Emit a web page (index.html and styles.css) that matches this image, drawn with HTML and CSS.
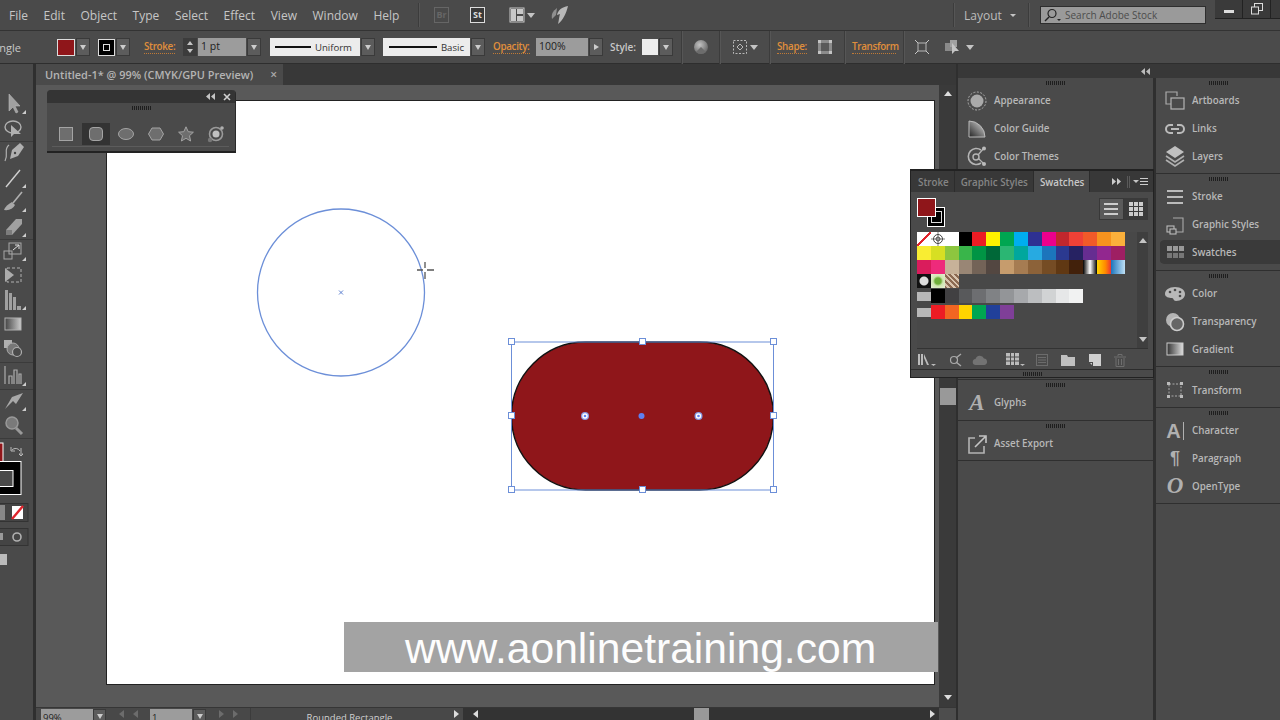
FILE: index.html
```html
<!DOCTYPE html>
<html lang="en">
<head>
    <meta charset="UTF-8">
    <title>Adobe Illustrator</title>
    <link rel="stylesheet" href="styles.css">
</head>
<body>
<div class="app">

    <!-- menu bar -->
    <header class="menubar">
        <nav class="menus">
            <span>File</span><span>Edit</span><span>Object</span><span>Type</span><span>Select</span><span>Effect</span><span>View</span><span>Window</span><span>Help</span>
        </nav>
        <i class="vsep m14"></i>
        <span class="app-btn dim m15">Br</span>
        <span class="app-btn m21">St</span>
        <svg class="m24" width="16" height="16" viewBox="0 0 16 16"><rect x="1" y="1" width="14" height="14" fill="#4a4a4a" stroke="#c8c8c8"/><rect x="2" y="2" width="5" height="12" fill="#c8c8c8"/><rect x="8" y="2" width="6" height="5" fill="#c8c8c8"/><rect x="8" y="9" width="6" height="5" fill="#c8c8c8"/></svg>
        <i class="tri m2"></i>
        <svg class="m15" width="20" height="20" viewBox="0 0 20 20"><path d="M18 1 C12 2 8 5 7 10 L10 9 C9 12 9 15 8 19 C13 15 16 9 18 1Z" fill="#b8b8b8"/><path d="M7 3 C3 6 1 9 2 14 L6 10Z" fill="#8f8f8f"/></svg>
        <div class="menu-right">
            <i class="vsep"></i>
            <span class="layout-name">Layout</span>
            <i class="tri small m8"></i>
            <i class="vsep m12"></i>
            <div class="stock-search">
                <svg width="20" height="16" viewBox="0 0 20 16"><circle cx="9" cy="6.5" r="4" fill="none" stroke="#222" stroke-width="1.2"/><path d="M6 10 L2 14" stroke="#222" stroke-width="1.4"/><path d="M14 12 h4 l-2 2z" fill="#222"/></svg>
                <span>Search Adobe Stock</span>
            </div>
            <div class="win-btns">
                <span class="win-btn"><i class="win-min"></i></span>
                <span class="win-btn"><svg width="12" height="12" viewBox="0 0 12 12"><rect x="3.5" y="0.5" width="8" height="7" fill="none" stroke="#ddd"/><rect x="0.5" y="4" width="7" height="7" fill="#3a3a3a" stroke="#ddd"/></svg></span>
                <span class="win-btn last"></span>
            </div>
        </div>
    </header>

    <!-- control bar -->
    <section class="controlbar">
        <div class="selection-name"><span>Rectangle</span></div>
        <span class="fill-swatch m36"></span>
        <span class="drop m1"></span>
        <span class="stroke-swatch m8"><i></i></span>
        <span class="drop m1"></span>
        <span class="link-label w31 m14">Stroke:</span>
        <span class="spinner m8"><i class="tri up"></i><i class="tri"></i></span>
        <span class="field w48 m1">1 pt</span>
        <span class="drop m1"></span>
        <span class="stroke-pick uniform w90 m9"><i></i>Uniform</span>
        <span class="drop m1"></span>
        <span class="stroke-pick w87 m8"><i></i>Basic</span>
        <span class="drop m1"></span>
        <span class="link-label w37 m8">Opacity:</span>
        <span class="field w52 m6">100%</span>
        <span class="drop side m1"></span>
        <span class="plain-label w25 m7">Style:</span>
        <span class="style-swatch m7"></span>
        <span class="drop m1"></span>
        <i class="vsep tall m8"></i>
        <svg class="m10" width="18" height="18" viewBox="0 0 18 18"><defs><radialGradient id="globeGrad" cx=".4" cy=".35" r=".75"><stop offset="0" stop-color="#c4c4c4"/><stop offset="1" stop-color="#5c5c5c"/></radialGradient></defs><circle cx="9" cy="9" r="7" fill="url(#globeGrad)"/><path d="M9 9 L4 14 A7 7 0 0 0 14 14Z" fill="#6c6c6c"/></svg>
        <i class="vsep tall m9"></i>
        <svg class="m12" width="16" height="16" viewBox="0 0 16 16"><rect x="1.5" y="1.5" width="13" height="13" fill="none" stroke="#b8b8b8" stroke-dasharray="2 1.5"/><path d="M8 5 L11 8 L8 11 L5 8Z" fill="none" stroke="#b8b8b8"/></svg>
        <i class="tri m2"></i>
        <i class="vsep tall m11"></i>
        <span class="link-label w30 m7">Shape:</span>
        <svg class="m10" width="16" height="16" viewBox="0 0 16 16"><rect x="1" y="1" width="14" height="14" fill="#8c8c8c"/><rect x="4" y="4" width="8" height="8" fill="#5a5a5a"/><path d="M1 1h3v3H1zM12 1h3v3h-3zM1 12h3v3H1zM12 12h3v3h-3z" fill="#c4c4c4"/></svg>
        <i class="vsep tall m11"></i>
        <span class="link-label w44 m7">Transform</span>
        <i class="vsep tall m7"></i>
        <svg class="m10" width="16" height="16" viewBox="0 0 16 16"><rect x="4" y="4" width="8" height="8" fill="none" stroke="#b8b8b8"/><path d="M1 1 L4 4 M15 1 L12 4 M1 15 L4 12 M15 15 L12 12" stroke="#c8c8c8"/></svg>
        <svg class="m14" width="18" height="16" viewBox="0 0 18 16"><rect x="1" y="4" width="8" height="8" fill="#8a8a8a"/><rect x="6" y="1" width="7" height="7" fill="#a0a0a0"/><path d="M8 4 L8 15 L11 12 L15 12Z" fill="#c4c4c4"/></svg>
        <i class="tri m4"></i>
    </section>

    <div class="workspace">

        <!-- tools -->
        <aside class="toolbar">
            <div class="tool"><svg width="30" height="24" viewBox="0 0 30 24"><path d="M9 2 V19 L13 15 L16 21 L18 20 L15 14 L20 14Z" fill="#a0a0a0" stroke="#b8b8b8" stroke-width=".6"/><path d="M26 18v4h-4z" fill="#ccc"/></svg></div>
            <div class="tool end"><svg width="30" height="24" viewBox="0 0 30 24"><ellipse cx="13" cy="10" rx="8" ry="6" fill="none" stroke="#b0b0b0" stroke-width="1.4"/><path d="M11 8 V20 L14 17 L21 17Z" fill="#b0b0b0"/></svg></div>
            <div class="tool"><svg width="30" height="24" viewBox="0 0 30 24"><path d="M12 9 L20 2 L24 6 L18 15 L10 18Z" fill="#b0b0b0"/><circle cx="15" cy="12" r="1.2" fill="#444"/><path d="M9 4 C3 9 9 12 5 20" fill="none" stroke="#b0b0b0" stroke-width="1.2"/></svg></div>
            <div class="tool"><svg width="30" height="24" viewBox="0 0 30 24"><path d="M6 21 L20 4" stroke="#d0d0d0" stroke-width="1.4"/><path d="M26 18v4h-4z" fill="#ccc"/></svg></div>
            <div class="tool"><svg width="30" height="24" viewBox="0 0 30 24"><path d="M22 2 L13 13" stroke="#b0b0b0" stroke-width="1.6"/><path d="M12 12 Q6 15 4 20 Q12 21 15 15Z" fill="#a8a8a8"/><path d="M26 18v4h-4z" fill="#ccc"/></svg></div>
            <div class="tool end"><svg width="30" height="24" viewBox="0 0 30 24"><path d="M6 15 L16 4 H22 L22 9 L12 20 H6Z" fill="#a0a0a0"/><path d="M6 15 H12 V20 H6Z" fill="#7c7c7c"/><path d="M26 18v4h-4z" fill="#ccc"/></svg></div>
            <div class="tool"><svg width="30" height="24" viewBox="0 0 30 24"><rect x="4" y="12" width="8" height="8" fill="none" stroke="#a8a8a8"/><rect x="9" y="4" width="12" height="11" fill="none" stroke="#a8a8a8"/><path d="M13 11 L19 6 M15 6 H19 V10" fill="none" stroke="#ddd"/><path d="M26 18v4h-4z" fill="#ccc"/></svg></div>
            <div class="tool"><svg width="30" height="24" viewBox="0 0 30 24"><rect x="7" y="4" width="14" height="14" fill="none" stroke="#b0b0b0" stroke-dasharray="3 2"/><path d="M5 4 L14 11 L5 18Z" fill="#acacac"/></svg></div>
            <div class="tool"><svg width="30" height="24" viewBox="0 0 30 24"><path d="M5 2h3v20H5zM9 5h3v17H9zM13 9h3v13h-3zM17 18h4v4h-4z" fill="#a0a0a0"/><path d="M26 18v4h-4z" fill="#ccc"/></svg></div>
            <div class="tool"><svg width="30" height="24" viewBox="0 0 30 24"><defs><linearGradient id="toolGrad"><stop offset="0" stop-color="#444"/><stop offset="1" stop-color="#ccc"/></linearGradient></defs><rect x="5" y="5" width="16" height="12" fill="url(#toolGrad)" stroke="#b0b0b0"/></svg></div>
            <div class="tool end"><svg width="30" height="24" viewBox="0 0 30 24"><rect x="4" y="3" width="8" height="8" fill="#b0b0b0"/><circle cx="13" cy="12" r="6" fill="#777" stroke="#aaa"/><circle cx="17" cy="15" r="4.5" fill="#4a4a4a" stroke="#b0b0b0" stroke-width="1.2"/></svg></div>
            <div class="tool end chart"><svg width="30" height="24" viewBox="0 0 30 24"><path d="M5 2 V20 M9 20 V12 H12 V20 M14 20 V6 H17 V20 M19 20 V10 H21 V20" fill="none" stroke="#acacac" stroke-width="1.2"/><path d="M26 18v4h-4z" fill="#ccc"/></svg></div>
            <div class="tool"><svg width="30" height="24" viewBox="0 0 30 24"><path d="M5 20 L13 12 L16 15 L23 4 L12 8 L5 20Z" fill="#a8a8a8"/><path d="M26 18v4h-4z" fill="#ccc"/></svg></div>
            <div class="tool end"><svg width="30" height="24" viewBox="0 0 30 24"><path d="M16 15 L22 21" stroke="#999" stroke-width="3"/><circle cx="12" cy="10" r="6" fill="#7a7a7a" stroke="#999" stroke-width="1.5"/></svg></div>
            <svg class="color-well" width="33" height="133" viewBox="0 437 33 133">
                <rect x="-3" y="441" width="6" height="34" fill="#8f161a" stroke="#fff"/>
                <path d="M12 448 A5 5 0 0 1 20 449 M11 445 v4 h4 M21 446 v5 M19 452 h4 l-2 2z" fill="none" stroke="#b8b8b8"/>
                <rect x="-4" y="459.5" width="25" height="33" fill="#000" stroke="#fff"/>
                <rect x="-4" y="468.5" width="17" height="16" fill="#4a4a4a" stroke="#fff"/>
                <rect x="-2" y="501.5" width="30" height="18" fill="#444" stroke="#333"/>
                <rect x="-2" y="503" width="7" height="15" fill="#888"/>
                <rect x="12" y="504" width="11" height="13" fill="#fff"/>
                <path d="M12 517 L23 504" stroke="#e0242c" stroke-width="2.4"/>
                <rect x="-2" y="526.5" width="30" height="17" fill="#444" stroke="#333"/>
                <circle cx="17" cy="535" r="4" fill="none" stroke="#b0b0b0" stroke-width="1.6"/>
                <rect x="-3" y="531" width="6" height="7" fill="#999"/>
                <rect x="-3" y="552" width="10" height="11" fill="#bbb"/>
                <rect x="-3" y="563" width="3" height="4" fill="#999"/>
            </svg>
        </aside>

        <!-- document window -->
        <main class="document">
            <div class="doc-tabs">
                <div class="doc-tab">
                    <span>Untitled-1* @ 99% (CMYK/GPU Preview)</span>
                    <span class="tab-close">×</span>
                </div>
            </div>
            <div class="doc-body">
                <div class="canvas">
                    <div class="artboard">
                        <svg class="art" width="827" height="583" viewBox="107 101 827 583">
                            <circle cx="341" cy="292.5" r="83.5" fill="none" stroke="#6c8fd8" stroke-width="1.3"/>
                            <path d="M339 290.5 l4 4 m0 -4 l-4 4" stroke="#5f82d0"/>
                            <path d="M425 262 v6 M425 272 v7 M417 270 h6 M427 270 h7" stroke="#555" stroke-width="1.3"/>

                            <rect x="511.5" y="342" width="262" height="148" rx="74" fill="#8f161a" stroke="#111" stroke-width="1.4"/>
                            <rect x="511.5" y="342" width="262" height="148" fill="none" stroke="#6c8fd8"/>
                            <g fill="#fff" stroke="#6c8fd8">
                                <rect x="508.5" y="338.5" width="6" height="6"/>
                                <rect x="639.5" y="338.5" width="6" height="6"/>
                                <rect x="770.5" y="338.5" width="6" height="6"/>
                                <rect x="508.5" y="412.5" width="6" height="6"/>
                                <rect x="770.5" y="412.5" width="6" height="6"/>
                                <rect x="508.5" y="486.5" width="6" height="6"/>
                                <rect x="639.5" y="486.5" width="6" height="6"/>
                                <rect x="770.5" y="486.5" width="6" height="6"/>
                            </g>
                            <g fill="#8a9de6">
                                <circle cx="585" cy="416" r="4"/>
                                <circle cx="698.5" cy="416" r="4"/>
                            </g>
                            <g fill="#fff">
                                <circle cx="585" cy="416" r="2.7"/>
                                <circle cx="698.5" cy="416" r="2.7"/>
                            </g>
                            <g fill="#5f7ff0">
                                <circle cx="585" cy="416" r="1.3"/>
                                <circle cx="698.5" cy="416" r="1.3"/>
                                <circle cx="641.5" cy="416" r="3"/>
                            </g>
                        </svg>
                    </div>
                    <div class="watermark">www.aonlinetraining.com</div>
                </div>
                <div class="vscroll">
                    <i class="tri up pale"></i>
                    <span class="vthumb"></span>
                    <i class="tri pale down-end"></i>
                </div>
            </div>
            <footer class="statusbar">
                <span class="status-field w52">99%</span>
                <span class="drop flat"></span>
                <span class="status-nav"><i class="arrow-l"></i><i class="arrow-l"></i></span>
                <span class="status-field w42">1</span>
                <span class="drop flat m1"></span>
                <span class="status-nav"><i class="arrow-r"></i><i class="arrow-r"></i></span>
                <span class="status-name">Rounded Rectangle</span>
                <i class="arrow-r bright"></i>
                <div class="hscroll">
                    <i class="arrow-l bright"></i>
                    <span class="hthumb"></span>
                    <i class="arrow-r bright"></i>
                </div>
                <span class="scroll-corner"></span>
            </footer>
        </main>

        <!-- collapsed panel docks -->
        <aside class="dock">
            <div class="dock-head">
                <svg width="9" height="7" viewBox="0 0 9 7"><path d="M4 0 V7 L0 3.5Z M9 0 V7 L5 3.5Z" fill="#bbb"/></svg>
            </div>
            <div class="dock-cols">
                <div class="dock-col first">
                    <div class="group">
                        <div class="grip"></div>
                        <div class="item">
                            <svg width="22" height="22" viewBox="0 0 22 22"><circle cx="11" cy="11" r="9" fill="none" stroke="#b0b0b0" stroke-dasharray="2 1.5"/><circle cx="11" cy="11" r="6.5" fill="#aaa"/></svg>
                            <span>Appearance</span>
                        </div>
                        <div class="item">
                            <svg width="22" height="22" viewBox="0 0 22 22"><defs><linearGradient id="guideGrad" x1="0" y1="1" x2="1" y2="0"><stop offset="0" stop-color="#222"/><stop offset="1" stop-color="#ddd"/></linearGradient></defs><path d="M3 19 V3 A16 16 0 0 1 19 19Z" fill="url(#guideGrad)" stroke="#bbb"/></svg>
                            <span>Color Guide</span>
                        </div>
                        <div class="item">
                            <svg width="22" height="22" viewBox="0 0 22 22"><path d="M15 5 A8 8 0 1 0 15 18" fill="none" stroke="#b4b4b4" stroke-width="1.6"/><circle cx="10" cy="12" r="3" fill="none" stroke="#b4b4b4" stroke-width="1.4"/><path d="M12 10 L18 3 M12 13 L18 19" stroke="#b4b4b4" stroke-width="1.3"/><circle cx="18" cy="3.5" r="2" fill="#bbb"/><circle cx="18" cy="19" r="2" fill="#bbb"/></svg>
                            <span>Color Themes</span>
                        </div>
                    </div>
                    <div class="panel-slot"></div>
                    <div class="group">
                        <div class="grip"></div>
                        <div class="item">
                            <em class="glyph-icon script">A</em>
                            <span>Glyphs</span>
                        </div>
                    </div>
                    <div class="group">
                        <div class="grip"></div>
                        <div class="item">
                            <svg width="22" height="22" viewBox="0 0 22 22"><path d="M9 5 H3 V20 H18 V13" fill="none" stroke="#b4b4b4" stroke-width="1.6"/><path d="M9 14 L19 4 M13 3 H20 V10" fill="none" stroke="#c4c4c4" stroke-width="1.6"/></svg>
                            <span>Asset Export</span>
                        </div>
                    </div>
                </div>
                <div class="dock-col">
                    <div class="group">
                        <div class="grip"></div>
                        <div class="item">
                            <svg width="22" height="22" viewBox="0 0 22 22"><path d="M13 6 V2 H2 V14 H7" fill="none" stroke="#aaa" stroke-width="1.2"/><rect x="7" y="8" width="13" height="11" fill="none" stroke="#b4b4b4" stroke-width="1.2"/></svg>
                            <span>Artboards</span>
                        </div>
                        <div class="item">
                            <svg width="22" height="22" viewBox="0 0 22 22"><path d="M9 7 H6 A4 4 0 0 0 6 15 H9 M13 7 H16 A4 4 0 0 1 16 15 H13 M7 11 H15" fill="none" stroke="#bbb" stroke-width="2"/></svg>
                            <span>Links</span>
                        </div>
                        <div class="item">
                            <svg width="22" height="22" viewBox="0 0 22 22"><path d="M11 1 L20 7 L11 13 L2 7Z" fill="#c0c0c0"/><path d="M2 11 L11 17 L20 11 M2 15 L11 21 L20 15" fill="none" stroke="#b0b0b0" stroke-width="1.6"/></svg>
                            <span>Layers</span>
                        </div>
                    </div>
                    <div class="group roomy">
                        <div class="grip"></div>
                        <div class="item">
                            <svg width="22" height="22" viewBox="0 0 22 22"><path d="M3 5 H19 M3 11 H19 M3 17 H19" stroke="#bbb" stroke-width="2"/></svg>
                            <span>Stroke</span>
                        </div>
                        <div class="item">
                            <svg width="22" height="22" viewBox="0 0 22 22"><path d="M9 4 H19 V18 H12" fill="none" stroke="#aaa" stroke-width="1.1"/><rect x="3" y="12" width="7" height="6" fill="none" stroke="#bbb" stroke-width="1.1"/><rect x="6" y="15" width="6" height="5" fill="#4a4a4a" stroke="#bbb" stroke-width="1.1"/></svg>
                            <span>Graphic Styles</span>
                        </div>
                        <div class="item on">
                            <svg width="22" height="22" viewBox="0 0 22 22"><path d="M3 5h5v5H3zM9 5h5v5H9zM15 5h5v5h-5z" fill="#999"/><path d="M3 12h5v5H3zM9 12h5v5H9zM15 12h5v5h-5z" fill="#777"/></svg>
                            <span>Swatches</span>
                        </div>
                    </div>
                    <div class="group">
                        <div class="grip"></div>
                        <div class="item">
                            <svg width="22" height="22" viewBox="0 0 22 22"><path d="M11 4 C17 4 21 7 21 11 C21 15 17 18 12 18 C9 18 10 15 8 15 C5 15 1 14 1 11 C1 7 5 4 11 4Z" fill="#b8b8b8"/><circle cx="6" cy="9" r="1.3" fill="#4a4a4a"/><circle cx="11" cy="7" r="1.3" fill="#4a4a4a"/><circle cx="16" cy="9" r="1.3" fill="#4a4a4a"/><circle cx="16" cy="13" r="1.3" fill="#4a4a4a"/></svg>
                            <span>Color</span>
                        </div>
                        <div class="item">
                            <svg width="22" height="22" viewBox="0 0 22 22"><circle cx="9" cy="9" r="7" fill="#b4b4b4"/><circle cx="13" cy="13" r="6.5" fill="#666" stroke="#ccc" stroke-width="1.6"/></svg>
                            <span>Transparency</span>
                        </div>
                        <div class="item">
                            <svg width="22" height="22" viewBox="0 0 22 22"><defs><linearGradient id="dockGrad"><stop offset="0" stop-color="#333"/><stop offset="1" stop-color="#ddd"/></linearGradient></defs><rect x="3" y="5" width="16" height="12" fill="url(#dockGrad)" stroke="#ccc"/></svg>
                            <span>Gradient</span>
                        </div>
                    </div>
                    <div class="group">
                        <div class="grip"></div>
                        <div class="item">
                            <svg width="22" height="22" viewBox="0 0 22 22"><rect x="5" y="5" width="12" height="12" fill="none" stroke="#aaa" stroke-dasharray="2 1.5"/><path d="M3 3h3v3H3zM16 3h3v3h-3zM3 16h3v3H3zM16 16h3v3h-3z" fill="#bbb"/></svg>
                            <span>Transform</span>
                        </div>
                    </div>
                    <div class="group">
                        <div class="grip"></div>
                        <div class="item">
                            <em class="glyph-icon sans">A<b></b></em>
                            <span>Character</span>
                        </div>
                        <div class="item">
                            <em class="glyph-icon para">¶</em>
                            <span>Paragraph</span>
                        </div>
                        <div class="item">
                            <em class="glyph-icon script">O</em>
                            <span>OpenType</span>
                        </div>
                    </div>
                </div>
            </div>
        </aside>
    </div>

    <!-- floating shape tools -->
    <div class="shape-panel">
        <div class="float-head">
            <svg width="9" height="7" viewBox="0 0 9 7"><path d="M4 0 V7 L0 3.5Z M9 0 V7 L5 3.5Z" fill="#c4c4c4"/></svg>
            <svg class="float-close" width="8" height="8" viewBox="0 0 8 8"><path d="M1 1 L7 7 M7 1 L1 7" stroke="#d0d0d0" stroke-width="1.6"/></svg>
        </div>
        <div class="grip"></div>
        <div class="shape-row">
            <span class="shape-btn"><svg width="16" height="16" viewBox="0 0 16 16"><rect x="1.5" y="1.5" width="13" height="13" fill="#6e6e6e" stroke="#a4a4a4"/></svg></span>
            <span class="shape-btn on"><svg width="16" height="16" viewBox="0 0 16 16"><rect x="1.5" y="1.5" width="13" height="13" rx="3.5" fill="#6e6e6e" stroke="#a4a4a4"/></svg></span>
            <span class="shape-btn"><svg width="18" height="14" viewBox="0 0 18 14"><ellipse cx="9" cy="7" rx="7.5" ry="5.5" fill="#6e6e6e" stroke="#a4a4a4"/></svg></span>
            <span class="shape-btn"><svg width="16" height="14" viewBox="0 0 16 14"><path d="M4 1 H12 L15.5 7 L12 13 H4 L.5 7Z" fill="#6e6e6e" stroke="#a4a4a4"/></svg></span>
            <span class="shape-btn"><svg width="16" height="16" viewBox="0 0 16 16"><path d="M8 .8 L10.2 5.7 L15.4 6.2 L11.5 9.7 L12.6 15 L8 12.3 L3.4 15 L4.5 9.7 L.6 6.2 L5.8 5.7Z" fill="#6e6e6e" stroke="#a4a4a4"/></svg></span>
            <span class="shape-btn"><svg width="18" height="18" viewBox="0 0 18 18"><circle cx="9" cy="9" r="6.5" fill="none" stroke="#9a9a9a" stroke-width="1.6"/><circle cx="9" cy="9" r="3.5" fill="#c0c0c0"/><circle cx="15" cy="3" r="1.8" fill="#b0b0b0"/><circle cx="3" cy="15" r="2.2" fill="#777"/></svg></span>
        </div>
        <div class="shape-rule"></div>
    </div>

    <!-- swatches panel popped out of the dock -->
    <div class="swatches-panel">
        <div class="panel-tabs">
            <span class="panel-tab">Stroke</span>
            <span class="panel-tab">Graphic Styles</span>
            <span class="panel-tab on">Swatches</span>
            <span class="panel-tab-tools">
                <svg class="tab-fwd" width="9" height="7" viewBox="0 0 9 7"><path d="M0 0 V7 L4 3.5Z M5 0 V7 L9 3.5Z" fill="#ccc"/></svg>
                <i class="tab-rule"></i><i class="tri small"></i><i class="tab-menu"></i>
            </span>
        </div>
        <div class="swatch-top">
            <div class="mini-well">
                <i class="mini-stroke"></i>
                <i class="mini-fill"></i>
            </div>
            <div class="view-btns">
                <span class="view-btn on"><svg width="16" height="14" viewBox="0 0 16 14"><path d="M1 2 H15 M1 7 H15 M1 12 H15" stroke="#ccc" stroke-width="2"/></svg></span>
                <span class="view-btn"><svg width="14" height="14" viewBox="0 0 14 14"><path d="M0 0h4v4H0zM5 0h4v4H5zM10 0h4v4h-4zM0 5h4v4H0zM5 5h4v4H5zM10 5h4v4h-4zM0 10h4v4H0zM5 10h4v4H5zM10 10h4v4h-4z" fill="#ccc"/></svg></span>
            </div>
        </div>
        <div class="swatch-list">
            <div class="swatch-rows">
                <div class="swatch-row">
                    <span class="swatch none"></span>
                    <span class="swatch"><svg width="14" height="14" viewBox="0 0 14 14"><rect width="14" height="14" fill="#fff"/><circle cx="7" cy="7" r="4.5" fill="none" stroke="#444"/><circle cx="7" cy="7" r="2" fill="none" stroke="#444"/><path d="M7 0V14M0 7H14" stroke="#444" stroke-width=".7"/></svg></span>
                    <span class="swatch" style="background:#fff"></span><span class="swatch" style="background:#000"></span><span class="swatch" style="background:#ed1c24"></span><span class="swatch" style="background:#fff200"></span><span class="swatch" style="background:#00a651"></span><span class="swatch" style="background:#00aeef"></span><span class="swatch" style="background:#2e3192"></span><span class="swatch" style="background:#ec008c"></span><span class="swatch" style="background:#c1272d"></span><span class="swatch" style="background:#ef4136"></span><span class="swatch" style="background:#f15a29"></span><span class="swatch" style="background:#f7931e"></span><span class="swatch" style="background:#fbb03b"></span>
                </div>
                <div class="swatch-row">
                    <span class="swatch" style="background:#f9ed32"></span><span class="swatch" style="background:#d7df23"></span><span class="swatch" style="background:#8dc63f"></span><span class="swatch" style="background:#39b54a"></span><span class="swatch" style="background:#009444"></span><span class="swatch" style="background:#006838"></span><span class="swatch" style="background:#2bb673"></span><span class="swatch" style="background:#00a79d"></span><span class="swatch" style="background:#27aae1"></span><span class="swatch" style="background:#1c75bc"></span><span class="swatch" style="background:#2b3990"></span><span class="swatch" style="background:#262262"></span><span class="swatch" style="background:#662d91"></span><span class="swatch" style="background:#92278f"></span><span class="swatch" style="background:#9e1f63"></span>
                </div>
                <div class="swatch-row">
                    <span class="swatch" style="background:#da1c5c"></span><span class="swatch" style="background:#ee2a7b"></span><span class="swatch" style="background:#c7b299"></span><span class="swatch" style="background:#998675"></span><span class="swatch" style="background:#736357"></span><span class="swatch" style="background:#534741"></span><span class="swatch" style="background:#c69c6d"></span><span class="swatch" style="background:#a67c52"></span><span class="swatch" style="background:#8c6239"></span><span class="swatch" style="background:#754c24"></span><span class="swatch" style="background:#603813"></span><span class="swatch" style="background:#42210b"></span>
                    <span class="swatch grad-bw"></span><span class="swatch grad-fire"></span><span class="swatch grad-sky"></span>
                </div>
                <div class="swatch-row">
                    <span class="swatch pat-dots"></span><span class="swatch pat-leaf"></span><span class="swatch pat-bark"></span>
                </div>
                <div class="swatch-row gapped">
                    <span class="swatch folder"></span>
                    <span class="swatch" style="background:#000"></span><span class="swatch" style="background:#414042"></span><span class="swatch" style="background:#58595b"></span><span class="swatch" style="background:#6d6e71"></span><span class="swatch" style="background:#808285"></span><span class="swatch" style="background:#939598"></span><span class="swatch" style="background:#a7a9ac"></span><span class="swatch" style="background:#bcbec0"></span><span class="swatch" style="background:#d1d3d4"></span><span class="swatch" style="background:#e6e7e8"></span><span class="swatch" style="background:#f1f2f2"></span>
                </div>
                <div class="swatch-row gapped">
                    <span class="swatch folder"></span>
                    <span class="swatch" style="background:#ed1c24"></span><span class="swatch" style="background:#f26522"></span><span class="swatch" style="background:#ffd400"></span><span class="swatch" style="background:#00a651"></span><span class="swatch" style="background:#21409a"></span><span class="swatch" style="background:#7f3f98"></span>
                </div>
            </div>
            <div class="swatch-scroll"><i class="tri up"></i><i class="tri"></i></div>
        </div>
        <div class="swatch-foot">
            <svg width="20" height="14" viewBox="0 0 20 14"><path d="M1 1h2v11H1zM4 1h2v11H4zM7 1 L12 12 H10 L7 5Z" fill="#bbb"/><path d="M14 11h5l-2.5 2z" fill="#bbb"/></svg>
            <svg class="f-link" width="14" height="14" viewBox="0 0 14 14"><circle cx="5" cy="7" r="3.5" fill="none" stroke="#aaa" stroke-width="1.2"/><path d="M7 5 L12 1 M7 9 L12 13" stroke="#aaa" stroke-width="1.4"/></svg>
            <svg class="f-cloud" width="16" height="12" viewBox="0 0 16 12"><path d="M4 11 A3 3 0 0 1 3.5 5 A4.5 4.5 0 0 1 12 4.5 A3.3 3.3 0 0 1 12.5 11Z" fill="#737373"/></svg>
            <svg class="f-grid" width="20" height="14" viewBox="0 0 20 14"><rect x=".5" y=".5" width="12" height="11" fill="#bbb" stroke="#bbb"/><path d="M4.5 0V12M8.5 0V12M0 4H13M0 8H13" stroke="#4a4a4a"/><path d="M14 11h5l-2.5 2z" fill="#bbb"/></svg>
            <svg class="f-list" width="12" height="12" viewBox="0 0 12 12"><rect x=".5" y=".5" width="11" height="11" fill="none" stroke="#6c6c6c"/><path d="M2 3.5H10M2 6H10M2 8.5H10" stroke="#6c6c6c"/></svg>
            <svg class="f-folder" width="14" height="12" viewBox="0 0 14 12"><path d="M0 1H6L7 3H14V12H0Z" fill="#c0c0c0"/></svg>
            <svg class="f-new" width="12" height="12" viewBox="0 0 12 12"><path d="M0 0H12V12H4V8H0Z" fill="#d0d0d0"/><path d="M1 9H3V11Z" fill="#d0d0d0"/></svg>
            <svg class="f-trash" width="12" height="13" viewBox="0 0 12 13"><path d="M0 3H12M4 2V.5H8V2M2 4V12.5H10V4M4.5 5V11M7.5 5V11" fill="none" stroke="#6e6e6e"/></svg>
        </div>
        <div class="grip foot-grip"></div>
    </div>
</div>
</body>
</html>
```

FILE: styles.css
```css
* {
    box-sizing: border-box;
}
html, body {
    margin: 0;
    height: 100%;
    background: #4a4a4a;
}
body {
    font-family: "Open Sans", "Liberation Sans", sans-serif;
    color: #c8c8c8;
    font-size: 12px;
}
i, em {
    font-style: normal;
    display: block;
    flex: none;
}
svg {
    display: block;
    flex: none;
}
.app {
    position: relative;
    width: 1280px;
    height: 720px;
    overflow: hidden;
    display: flex;
    flex-direction: column;
    background: #4a4a4a;
}

/* spacing helpers for the toolbars */
.m1 { margin-left: 1px; }
.m2 { margin-left: 2px; }
.m4 { margin-left: 4px; }
.m6 { margin-left: 6px; }
.m7 { margin-left: 7px; }
.m8 { margin-left: 8px; }
.m9 { margin-left: 9px; }
.m10 { margin-left: 10px; }
.m11 { margin-left: 11px; }
.m12 { margin-left: 12px; }
.m14 { margin-left: 14px; }
.m15 { margin-left: 15px; }
.m21 { margin-left: 21px; }
.m24 { margin-left: 24px; }
.m36 { margin-left: 36px; }
.w25 { width: 25px; }
.w30 { width: 30px; }
.w31 { width: 31px; }
.w37 { width: 37px; }
.w42 { width: 42px; }
.w44 { width: 44px; }
.w48 { width: 48px; }
.w52 { width: 52px; }
.w87 { width: 87px; }
.w90 { width: 90px; }

.tri {
    width: 0;
    height: 0;
    border-left: 4px solid transparent;
    border-right: 4px solid transparent;
    border-top: 5px solid #c4c4c4;
}
.tri.small {
    border-left-width: 3px;
    border-right-width: 3px;
    border-top-width: 3px;
}
.tri.up {
    border-top: 0;
    border-bottom: 5px solid #c4c4c4;
}
.vsep {
    width: 1px;
    height: 24px;
    background: #3c3c3c;
    box-shadow: 1px 0 0 #565656;
}
.vsep.tall {
    height: 33px;
}

/* menu bar */
.menubar {
    height: 31px;
    flex: none;
    display: flex;
    align-items: center;
    background: #4a4a4a;
    border-bottom: 1px solid #333;
}
.menus {
    display: flex;
    gap: 15.6px;
    width: 404px;
    padding-left: 9px;
    font-size: 12px;
    color: #c6c6c6;
}
.app-btn {
    width: 15px;
    height: 16px;
    border: 1px solid #ddd;
    font-size: 9px;
    font-weight: 700;
    line-height: 14px;
    text-align: center;
    color: #ddd;
    background: #3a3a3a;
}
.app-btn.dim {
    border-color: #666;
    color: #666;
    background: none;
}
.menu-right {
    margin-left: auto;
    display: flex;
    align-items: center;
    height: 100%;
}
.layout-name {
    margin-left: 10px;
    width: 38px;
    color: #bcbcbc;
}
.stock-search {
    margin-left: 11px;
    width: 166px;
    height: 18px;
    display: flex;
    align-items: center;
    gap: 2px;
    padding-left: 2px;
    background: #9a9a9a;
    border: 1px solid #2e2e2e;
    font-size: 10px;
    color: #4c4c4c;
}
.win-btns {
    margin: 0 0 11px 9px;
    display: flex;
    align-self: flex-start;
    height: 19px;
}
.win-btn {
    width: 28px;
    height: 100%;
    display: flex;
    align-items: center;
    justify-content: center;
    background: #3a3a3a;
    border-right: 1px solid #222;
    border-bottom: 1px solid #222;
}
.win-btn.last {
    width: 9px;
    border-right: 0;
}
.win-min {
    width: 10px;
    height: 3px;
    margin-top: 4px;
    background: #ddd;
}

/* control bar */
.controlbar {
    height: 33px;
    flex: none;
    display: flex;
    align-items: center;
    background: #4b4b4b;
    border-bottom: 1px solid #2e2e2e;
    font-size: 11px;
}
.selection-name {
    width: 21px;
    display: flex;
    justify-content: flex-end;
    overflow: hidden;
    flex: none;
}
.fill-swatch {
    width: 18px;
    height: 17px;
    background: #8f161a;
    border: 1px solid #ddd;
    flex: none;
}
.stroke-swatch {
    width: 17px;
    height: 17px;
    background: #000;
    border: 1px solid #ddd;
    display: flex;
    align-items: center;
    justify-content: center;
    flex: none;
}
.stroke-swatch i {
    width: 7px;
    height: 7px;
    border: 1px solid #ddd;
}
.drop {
    width: 14px;
    height: 18px;
    display: flex;
    align-items: center;
    justify-content: center;
    background: #5c5c5c;
    border: 1px solid #3a3a3a;
    flex: none;
}
.drop::after {
    content: "";
    border-left: 3.5px solid transparent;
    border-right: 3.5px solid transparent;
    border-top: 5px solid #ccc;
}
.drop.side::after {
    border-top: 3.5px solid transparent;
    border-bottom: 3.5px solid transparent;
    border-left: 5px solid #ccc;
    border-right: 0;
}
.link-label {
    color: #e08f3c;
    border-bottom: 1px dotted #c07a36;
    line-height: 13px;
    white-space: nowrap;
    flex: none;
    font-size: 9.8px;
    font-weight: 600;
    letter-spacing: -.3px;
}
.plain-label {
    flex: none;
    font-size: 10px;
    font-weight: 600;
}
.spinner {
    width: 14px;
    height: 18px;
    display: flex;
    flex-direction: column;
    align-items: center;
    justify-content: space-evenly;
    background: #3c3c3c;
    flex: none;
}
.spinner .tri {
    border-left-width: 3.5px;
    border-right-width: 3.5px;
    border-top-width: 4px;
}
.spinner .tri.up {
    border-bottom-width: 4px;
}
.field {
    height: 18px;
    padding-left: 3px;
    line-height: 17px;
    background: #9c9c9c;
    color: #222;
    font-size: 10.5px;
    flex: none;
}
.stroke-pick {
    height: 18px;
    display: flex;
    align-items: center;
    padding: 0 6px;
    background: #ececec;
    color: #333;
    font-size: 9.6px;
    flex: none;
}
.stroke-pick.uniform {
    padding: 0 8px 0 5px;
}
.stroke-pick i {
    flex: 1;
    height: 2px;
    margin-right: 4px;
    background: #111;
}

.style-swatch {
    width: 16px;
    height: 16px;
    background: #ececec;
    flex: none;
}

/* workspace */
.workspace {
    flex: 1;
    display: flex;
    min-height: 0;
}
.toolbar {
    width: 36px;
    flex: none;
    padding-top: 28px;
    background: #4a4a4a;
    border-right: 3px solid #2f2f2f;
}
.tool {
    height: 24.5px;
    display: flex;
    align-items: center;
}
.tool.end {
    box-shadow: 0 1px 0 #3b3b3b;
}
.tool.chart {
    margin-top: 2.5px;
}
.color-well {
    margin-top: 1px;
}

/* document */
.document {
    width: 920px;
    flex: none;
    display: flex;
    flex-direction: column;
}
.doc-tabs {
    height: 21px;
    flex: none;
    background: #383838;
}
.doc-tab {
    width: 247px;
    height: 100%;
    display: flex;
    align-items: center;
    justify-content: space-between;
    padding: 0 6px 0 9px;
    background: #4a4a4a;
    font-size: 10.95px;
    font-weight: 600;
    color: #b4b4b4;
}
.tab-close {
    font-size: 12px;
    color: #aaa;
}
.doc-body {
    height: 622px;
    flex: none;
    display: flex;
}
.canvas {
    position: relative;
    flex: 1;
    padding: 15px 0 0 70px;
    background: #595959;
}
.artboard {
    width: 829px;
    height: 585px;
    background: #fff;
    border: 1px solid #222;
}
.watermark {
    position: absolute;
    left: 308px;
    top: 537px;
    width: 594px;
    height: 50px;
    padding-left: 61px;
    background: #a3a3a3;
    font-family: "Liberation Sans", sans-serif;
    font-size: 42.6px;
    line-height: 53px;
    color: #fdfdfd;
}
.vscroll {
    width: 17px;
    flex: none;
    display: flex;
    flex-direction: column;
    align-items: center;
    padding: 6px 0 7px;
    background: #3a3a3a;
}
.tri.pale {
    border-top-color: #ddd;
    border-bottom-color: #ddd;
}
.vthumb {
    width: 16px;
    height: 17px;
    margin-top: 292px;
    background: #999;
}
.down-end {
    margin-top: auto;
}
.statusbar {
    height: 13px;
    flex: none;
    display: flex;
    padding-left: 5px;
    background: #484848;
    border-top: 1px solid #363636;
    overflow: hidden;
    font-size: 9.5px;
}
.status-field {
    height: 20px;
    margin-top: 1px;
    padding-left: 2px;
    line-height: 17px;
    background: #9c9c9c;
    color: #222;
    flex: none;
}
.drop.flat {
    width: 13px;
    margin-top: 1px;
    height: 14px;
}
.status-nav {
    width: 44px;
    flex: none;
    display: flex;
    justify-content: center;
    align-items: center;
    gap: 9px;
    height: 11px;
}
.arrow-l, .arrow-r {
    width: 0;
    height: 0;
    border-top: 4px solid transparent;
    border-bottom: 4px solid transparent;
    border-right: 5px solid #6c6c6c;
}
.arrow-r {
    border-right: 0;
    border-left: 5px solid #6c6c6c;
}
.arrow-l.bright {
    border-right-color: #ddd;
}
.arrow-r.bright {
    border-left-color: #ddd;
}
.statusbar > .arrow-r {
    margin: 2px 0 0 6px;
}
.status-name {
    width: 198px;
    flex: none;
    text-align: center;
    line-height: 19px;
    color: #d0d0d0;
    border-left: 1px solid #3c3c3c;
}
.hscroll {
    margin-left: 4px;
    flex: 1;
    display: flex;
    align-items: center;
    height: 12px;
    padding: 0 4px 0 10px;
    background: #333;
}
.hthumb {
    width: 15px;
    height: 12px;
    margin: 0 auto 0 216px;
    background: #999;
}
.scroll-corner {
    width: 17px;
    flex: none;
    background: #4d4d4d;
}

/* dock */
.dock {
    flex: 1;
    display: flex;
    flex-direction: column;
    border-left: 2px solid #2f2f2f;
}
.dock-head {
    height: 14px;
    flex: none;
    display: flex;
    align-items: center;
    justify-content: flex-end;
    padding-right: 130px;
    background: #383838;
}
.dock-cols {
    flex: 1;
    display: flex;
}
.dock-col {
    flex: 1;
}
.dock-col.first {
    width: 198px;
    flex: none;
    border-right: 3px solid #2f2f2f;
}
.group {
    padding-bottom: 3px;
    border-bottom: 1px solid #2f2f2f;
}
.group.roomy {
    padding-bottom: 4px;
}
.grip {
    width: 19px;
    height: 4px;
    margin: 3px auto 2px;
    background: repeating-linear-gradient(90deg, #1e1e1e 0 1px, transparent 1px 2px);
}
.panel-slot {
    height: 206px;
    border-bottom: 1px solid #2f2f2f;
}
.item {
    height: 27.7px;
    display: flex;
    align-items: center;
    gap: 6px;
    padding-left: 8px;
    font-size: 9.8px;
    font-weight: 600;
    color: #b8b8b8;
}
.item.on {
    margin-left: 4px;
    padding-left: 4px;
    background: #3a3a3a;
    background-clip: padding-box;
    border-top: 2px solid transparent;
    border-bottom: 2px solid transparent;
    border-radius: 5px 0 0 5px;
}
.glyph-icon {
    width: 22px;
    text-align: center;
    color: #b0b0b0;
    line-height: 22px;
}
.glyph-icon.script {
    font-family: "Liberation Serif", serif;
    font-style: italic;
    font-size: 23px;
}
.glyph-icon.sans {
    font-family: "Liberation Sans", sans-serif;
    font-size: 20px;
    display: flex;
    justify-content: center;
}
.glyph-icon.sans b {
    width: 1px;
    height: 18px;
    margin: 2px 0 0 2px;
    background: #b0b0b0;
}
.glyph-icon.para {
    font-family: "Liberation Sans", sans-serif;
    font-weight: 700;
    font-size: 18px;
}

/* floating shape tools */
.shape-panel {
    position: absolute;
    left: 47px;
    top: 90px;
    width: 189px;
    height: 63px;
    background: #4a4a4a;
    border-right: 1px solid #2a2a2a;
    border-bottom: 2px solid #222;
    border-radius: 4px 4px 0 0;
}
.float-head {
    height: 13px;
    display: flex;
    align-items: center;
    justify-content: flex-end;
    padding-right: 4px;
    background: #343434;
    border-radius: 4px 4px 0 0;
}
.float-close {
    margin-left: 8px;
}
.shape-row {
    display: flex;
    padding-left: 4px;
    margin-top: 13px;
}
.shape-btn {
    width: 30px;
    height: 22px;
    display: flex;
    align-items: center;
    justify-content: center;
    flex: none;
}
.shape-btn.on {
    background: #333;
    background-clip: padding-box;
    border-left: 1px solid transparent;
    border-right: 1px solid transparent;
}
.shape-rule {
    height: 1px;
    margin: 1px 6px 0 5px;
    background: #5c5c5c;
}

/* swatches panel */
.swatches-panel {
    position: absolute;
    left: 910px;
    top: 170px;
    width: 244px;
    height: 208px;
    background: #4a4a4a;
    border: 1px solid #222;
    box-shadow: 0 -1px 0 #222;
}
.panel-tabs {
    height: 21px;
    display: flex;
    align-items: stretch;
    background: #383838;
    font-size: 9.8px;
    font-weight: 600;
    color: #858585;
}
.panel-tab {
    padding: 5px 5px 0 6px;
    border-right: 1px solid #2c2c2c;
}
.panel-tab:first-child {
    padding-left: 7px;
}
.panel-tab.on {
    background: #4a4a4a;
    color: #c8c8c8;
}
.panel-tab-tools {
    margin-left: auto;
    display: flex;
    align-items: center;
    gap: 3px;
    padding-right: 5px;
}
.tab-fwd {
    margin-right: 3px;
}
.tab-rule {
    width: 3px;
    height: 12px;
    border-left: 1px solid #5a5a5a;
    border-right: 1px solid #5a5a5a;
}
.tab-menu {
    width: 8px;
    height: 7px;
    margin-left: -2px;
    background: repeating-linear-gradient(180deg, #ccc 0 1px, transparent 1px 3px);
}
.swatch-top {
    height: 40px;
    display: flex;
    justify-content: space-between;
    padding: 6px 5px 0 6px;
}
.mini-well {
    position: relative;
    width: 30px;
    height: 30px;
}
.mini-fill {
    position: absolute;
    left: 0;
    top: 0;
    width: 19px;
    height: 19px;
    background: #8f161a;
    border: 1px solid #fff;
}
.mini-stroke {
    position: absolute;
    left: 10px;
    top: 9px;
    width: 18px;
    height: 20px;
    background: #000;
    border: 1px solid #fff;
}
.mini-stroke::after {
    content: "";
    display: block;
    width: 9px;
    height: 10px;
    margin: 3px auto 0;
    border: 1px solid #ddd;
}
.view-btns {
    display: flex;
    height: 22px;
    background: #3a3a3a;
}
.view-btn {
    width: 24.5px;
    display: flex;
    align-items: center;
    justify-content: center;
}
.view-btn.on {
    background: #5a5a5a;
    border: 1px solid #383838;
}
.swatch-list {
    height: 117px;
    margin: 0 5px 0 6px;
    display: flex;
    justify-content: space-between;
    background: #484848;
    border-bottom: 1px solid #333;
}
.swatch-row {
    display: flex;
    height: 14px;
}
.swatch-row.gapped {
    margin-top: 1px;
}
.swatch-row.gapped + .gapped {
    margin-top: 2px;
}
.swatch {
    width: 13.87px;
    height: 14px;
    flex: none;
    overflow: hidden;
}
.swatch.none {
    background: linear-gradient(to top left, #fff 0 44%, #e0242c 44% 56%, #fff 56%);
}
.grad-bw {
    background: linear-gradient(90deg, #000, #fff 50%, #000);
}
.grad-fire {
    background: linear-gradient(90deg, #ffd400, #ff8a00 60%, #e33);
}
.grad-sky {
    background: linear-gradient(90deg, #1c75bc, #bfe0f5);
}
.pat-dots {
    background: radial-gradient(circle, #ddd 0 4px, #111 5px);
}
.pat-leaf {
    background: radial-gradient(circle, #6fae3a 0 3px, #cfe6b0 5px, #e8f0d8);
}
.pat-bark {
    background: repeating-linear-gradient(45deg, #8c6a52 0 2px, #d8c4ae 2px 4px);
}
.swatch.folder {
    background: linear-gradient(180deg, transparent 0 3px, #b8b8b8 3px 12px, transparent 12px);
}
.swatch-scroll {
    width: 11px;
    display: flex;
    flex-direction: column;
    align-items: center;
    justify-content: space-between;
    padding: 6px 0;
    background: #3f3f3f;
}
.swatch-foot {
    height: 19px;
    margin-top: 2px;
    display: flex;
    align-items: center;
    padding-left: 6px;
    border-bottom: 1px solid #2c2c2c;
}
.f-link { margin-left: 12px; }
.f-cloud { margin-left: 9px; }
.f-grid { margin-left: 18px; }
.f-list { margin-left: 10px; }
.f-folder { margin-left: 13px; }
.f-new { margin-left: 14px; }
.f-trash { margin-left: 13px; }
.foot-grip {
    margin: 2px auto 0;
}
```
